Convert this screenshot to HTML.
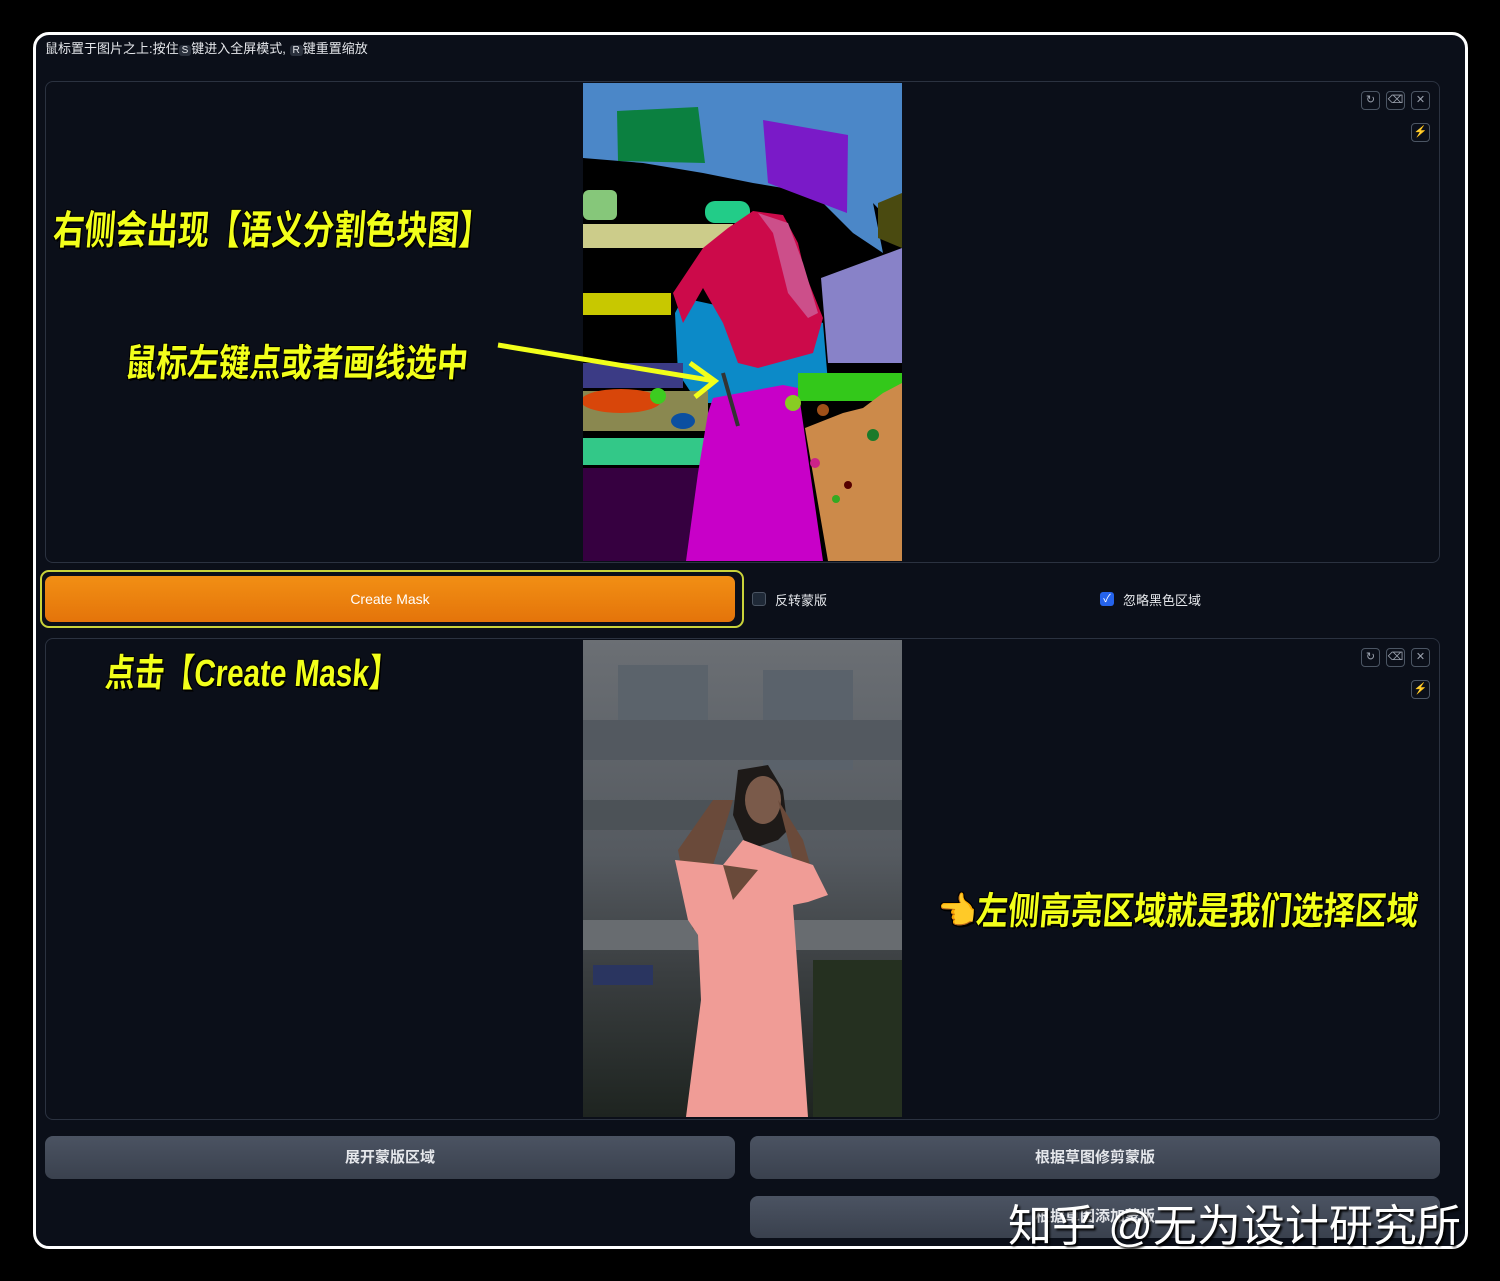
<!DOCTYPE html>
<html><head><meta charset="utf-8"><style>
*{margin:0;padding:0;box-sizing:border-box}
body{width:1500px;height:1281px;background:#000;position:relative;overflow:hidden;font-family:"Liberation Sans","Noto Sans CJK SC",sans-serif}
.a{position:absolute}
.frame{left:33px;top:32px;width:1435px;height:1217px;border:3px solid #fff;border-radius:16px;background:#0b0f19}
.panel{border:1.5px solid #2b3240;border-radius:8px;background:#0b0f19}
.btn{background:linear-gradient(#4b5362,#3a414e);border-radius:8px;color:#e5e7eb;font-size:15px;font-weight:bold;text-align:center}
.ico{width:19px;height:19px;border:1px solid #4b5563;border-radius:4px;color:#9ca3af;font-size:11px;text-align:center;line-height:17px}
.y{color:#f2ff1a;font-weight:bold;white-space:nowrap;transform-origin:0 0;text-shadow:2px 2px 0 #000,-1px -1px 0 #000,1px -1px 0 #000,-1px 1px 0 #000}
.kbd{display:inline-block;background:#2a303c;border-radius:3px;padding:0 3px;font-size:10px}
</style></head><body>
<div class="a frame"></div>
<div class="a" style="left:45px;top:38px;color:#e5e7eb;font-size:13px">鼠标置于图片之上:按住<span class="kbd">S</span>键进入全屏模式, <span class="kbd">R</span>键重置缩放</div>

<div class="a panel" style="left:45px;top:81px;width:1395px;height:482px"></div>
<div class="a panel" style="left:45px;top:638px;width:1395px;height:482px"></div>

<div class="a ico" style="left:1361px;top:91px">↻</div>
<div class="a ico" style="left:1386px;top:91px">⌫</div>
<div class="a ico" style="left:1411px;top:91px">✕</div>
<div class="a ico" style="left:1411px;top:123px">⚡</div>
<div class="a ico" style="left:1361px;top:648px">↻</div>
<div class="a ico" style="left:1386px;top:648px">⌫</div>
<div class="a ico" style="left:1411px;top:648px">✕</div>
<div class="a ico" style="left:1411px;top:680px">⚡</div>

<svg class="a" style="left:583px;top:83px" width="319" height="478" viewBox="0 0 319 478">
<rect width="319" height="478" fill="#000"/>
<path d="M0 0H319V150L290 120 300 170 270 150 230 110 170 100 120 90 60 80 0 75Z" fill="#4b87c8"/>
<path d="M34 28L115 24 122 80 35 78Z" fill="#0b8040"/>
<path d="M180 37L265 52 264 130 185 100Z" fill="#7a1ac8"/>
<path d="M295 120L319 110V165L295 155Z" fill="#4a4a10"/>
<rect x="0" y="107" width="34" height="30" rx="6" fill="#86c77a"/>
<rect x="122" y="118" width="45" height="22" rx="10" fill="#22cc88"/>
<rect x="0" y="141" width="150" height="24" fill="#cccc8a"/>
<rect x="0" y="210" width="88" height="22" fill="#c8c800"/>
<path d="M238 195L319 165V280L245 280Z" fill="#8882c8"/>
<path d="M95 290L92 230 100 215 160 228 205 225 240 240 245 300 190 310 140 320 115 320Z" fill="#0c8ac8"/>
<path d="M90 210L120 165 145 145 170 128 200 132 215 160 222 190 240 235 230 270 175 285 155 280 140 240 120 205 100 240Z" fill="#cc0a4a"/>
<path d="M175 130L205 140 220 180 235 230 225 235 205 210 190 150Z" fill="#cc4f8a"/>
<rect x="0" y="280" width="100" height="25" fill="#3b3b85"/>
<rect x="0" y="308" width="125" height="40" fill="#8a8850"/>
<ellipse cx="38" cy="318" rx="40" ry="12" fill="#d8460a"/>
<circle cx="75" cy="313" r="8" fill="#3ccc20"/>
<ellipse cx="100" cy="338" rx="12" ry="8" fill="#0b4fa0"/>
<rect x="0" y="355" width="122" height="27" fill="#33c888"/>
<rect x="0" y="385" width="118" height="93" fill="#360040"/>
<path d="M130 315L200 302 215 305 240 478H103L115 390 125 330Z" fill="#c800c8"/>
<rect x="215" y="290" width="104" height="28" fill="#33c81a"/>
<path d="M222 345L260 330 280 325 300 310 319 300V478H245Z" fill="#cc8a4a"/>
<circle cx="210" cy="320" r="8" fill="#88cc22"/>
<circle cx="240" cy="327" r="6" fill="#a05018"/>
<circle cx="290" cy="352" r="6" fill="#1a7a2a"/>
<circle cx="232" cy="380" r="5" fill="#cc2288"/>
<circle cx="265" cy="402" r="4" fill="#500"/>
<circle cx="253" cy="416" r="4" fill="#3a2"/>
<path d="M140 290L155 343" stroke="#333" stroke-width="4"/>
</svg>

<svg class="a" style="left:583px;top:640px" width="319" height="477" viewBox="0 0 319 477">
<defs><linearGradient id="g" x1="0" y1="0" x2="0" y2="1"><stop offset="0" stop-color="#6b6f74"/><stop offset=".45" stop-color="#555a60"/><stop offset=".7" stop-color="#3a3e40"/><stop offset="1" stop-color="#1e2420"/></linearGradient></defs>
<rect width="319" height="477" fill="url(#g)"/>
<rect x="35" y="25" width="90" height="60" fill="#5b636b"/>
<rect x="180" y="30" width="90" height="100" fill="#5a626b"/>
<rect x="0" y="80" width="319" height="40" fill="#535960"/>
<rect x="0" y="160" width="319" height="30" fill="#4c5257"/>
<rect x="0" y="280" width="319" height="30" fill="#686c70"/>
<rect x="10" y="325" width="60" height="20" fill="#2a3560"/>
<rect x="230" y="320" width="89" height="157" fill="#253020"/>
<path d="M155 130L185 125 200 150 205 190 195 200 165 210 150 175Z" fill="#1e1a18"/>
<ellipse cx="180" cy="160" rx="18" ry="24" fill="#7a5a4a"/>
<path d="M95 210L130 160 150 160 135 210 125 240 110 290Z" fill="#6a4a3a"/>
<path d="M195 160L220 200 230 235 220 260Z" fill="#6a4a3a"/>
<path d="M92 220L140 225 160 200 200 215 230 225 245 255 225 262 210 265 225 477H103L118 360 115 295 105 280Z" fill="#f09c96"/>
<path d="M140 225L150 260 175 230Z" fill="#6a4a3a"/>
</svg>

<div class="a" style="left:40px;top:570px;width:704px;height:58px;border:2px solid #c9d33a;border-radius:9px"></div>
<div class="a" style="left:45px;top:576px;width:690px;height:46px;background:linear-gradient(#f28f14,#e4740a);border-radius:7px;color:#fff;font-size:14px;text-align:center;line-height:46px">Create Mask</div>
<div class="a" style="left:752px;top:592px;width:14px;height:14px;border:1px solid #4b5563;border-radius:3px;background:#1f2937"></div>
<div class="a" style="left:775px;top:590px;color:#e5e7eb;font-size:13px">反转蒙版</div>
<div class="a" style="left:1100px;top:592px;width:14px;height:14px;border-radius:3px;background:#2563eb;color:#fff;font-size:11px;line-height:14px;text-align:center">✓</div>
<div class="a" style="left:1123px;top:590px;color:#e5e7eb;font-size:13px">忽略黑色区域</div>

<div class="a btn" style="left:45px;top:1136px;width:690px;height:43px;line-height:43px">展开蒙版区域</div>
<div class="a btn" style="left:750px;top:1136px;width:690px;height:43px;line-height:43px">根据草图修剪蒙版</div>
<div class="a btn" style="left:750px;top:1196px;width:690px;height:42px;line-height:42px">根据草图添加蒙版</div>

<div class="a y" style="left:56px;top:198px;font-size:40px;transform:scaleX(0.78) skewX(-6deg)">右侧会出现【语义分割色块图】</div>
<div class="a y" style="left:128px;top:332px;font-size:38px;transform:scaleX(0.82) skewX(-6deg)">鼠标左键点或者画线选中</div>
<svg class="a" style="left:490px;top:335px" width="240" height="70"><path d="M8 10L225 46M200 28L225 46 205 62" stroke="#f2ff1a" stroke-width="5" fill="none"/></svg>
<div class="a y" style="left:108px;top:642px;font-size:38px;transform:scaleX(0.78) skewX(-6deg)">点击【Create Mask】</div>
<div class="a y" style="left:940px;top:880px;font-size:38px;transform:scaleX(0.83) skewX(-6deg)">👈左侧高亮区域就是我们选择区域</div>
<div class="a" style="left:1008px;top:1190px;color:#fff;font-size:44px;text-shadow:2px 2px 2px #000;white-space:nowrap">知乎 @无为设计研究所</div>
</body></html>
